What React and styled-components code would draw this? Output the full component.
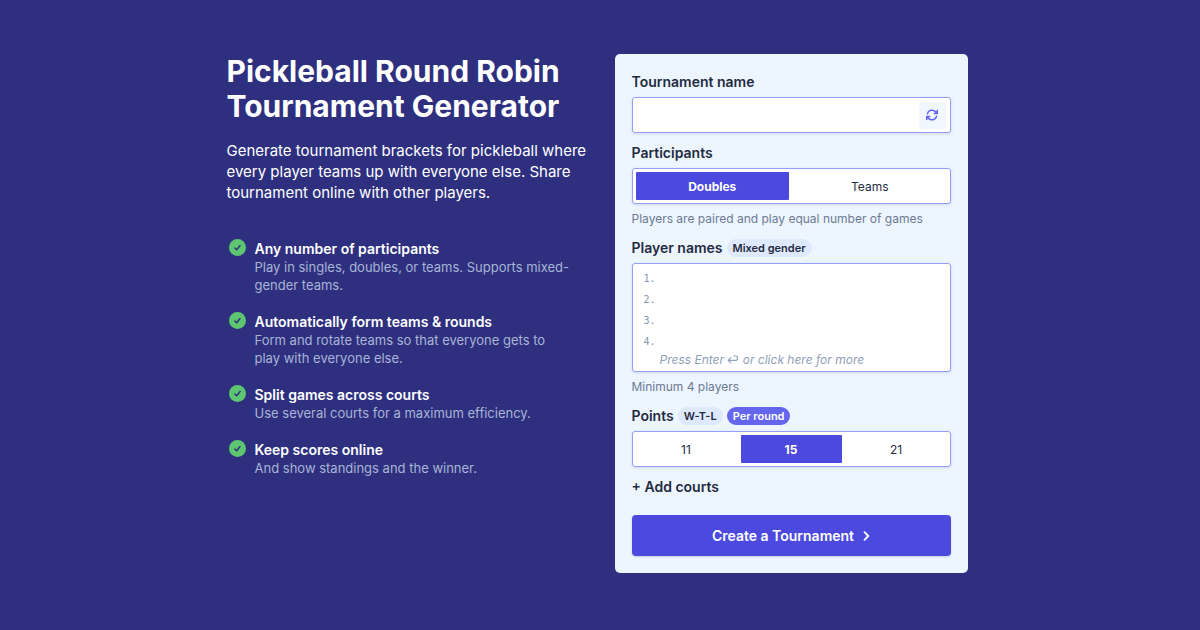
import React, { useState } from "react";
import styled, { createGlobalStyle } from "styled-components";

const features = [
  {
    title: "Any number of participants",
    text: "Play in singles, doubles, or teams. Supports mixed-gender teams.",
  },
  {
    title: "Automatically form teams & rounds",
    text: "Form and rotate teams so that everyone gets to play with everyone else.",
  },
  {
    title: "Split games across courts",
    text: "Use several courts for a maximum efficiency.",
  },
  {
    title: "Keep scores online",
    text: "And show standings and the winner.",
  },
];

const CheckIcon = () => (
  <svg width="17" height="17" viewBox="0 0 17 17" aria-hidden="true">
    <circle cx="8.5" cy="8.5" r="8.5" fill="#5ec571" />
    <path
      d="M5.8 8.9l1.9 1.9 3.4-4.3"
      fill="none"
      stroke="#2e307f"
      strokeWidth="1.4"
      strokeLinecap="round"
      strokeLinejoin="round"
    />
  </svg>
);

const RefreshIcon = () => (
  <svg width="14" height="14" viewBox="0 0 24 24" aria-hidden="true">
    <path
      d="M16.023 9.348h4.992v-.001M2.985 19.644v-4.992m0 0h4.992m-4.993 0l3.181 3.183a8.25 8.25 0 0013.803-3.7M4.031 9.865a8.25 8.25 0 0113.803-3.7l3.181 3.182m0-4.991v4.99"
      fill="none"
      stroke="currentColor"
      strokeWidth="2.6"
      strokeLinecap="round"
      strokeLinejoin="round"
    />
  </svg>
);

const ReturnIcon = () => (
  <svg width="12" height="9" viewBox="0 0 12 9" aria-hidden="true">
    <path
      d="M3.8 2.7L1.2 5.3l2.6 2.6M1.2 5.3h7.6q1.6 0 1.6-1.6V2.6q0-1.6-1.6-1.6H7"
      fill="none"
      stroke="currentColor"
      strokeWidth="1.2"
      strokeLinecap="round"
      strokeLinejoin="round"
    />
  </svg>
);

const ChevronIcon = () => (
  <svg width="7" height="10" viewBox="0 0 7 10" aria-hidden="true">
    <path
      d="M1.5 1.2L5.3 5 1.5 8.8"
      fill="none"
      stroke="currentColor"
      strokeWidth="1.8"
      strokeLinecap="round"
      strokeLinejoin="round"
    />
  </svg>
);

const Segmented = ({ name, legend, options, value, onChange }) => (
  <Segments role="radiogroup" aria-label={legend}>
    {options.map((option) => (
      <Segment key={option}>
        <SegmentInput
          type="radio"
          name={name}
          value={option}
          checked={option === value}
          onChange={() => onChange(option)}
        />
        <SegmentLabel>{option}</SegmentLabel>
      </Segment>
    ))}
  </Segments>
);

const App = () => {
  const [name, setName] = useState("");
  const [participants, setParticipants] = useState("Doubles");
  const [points, setPoints] = useState("15");
  const [scoring, setScoring] = useState("Per round");
  const [mixed, setMixed] = useState(false);
  const [players, setPlayers] = useState(["", "", "", ""]);

  const updatePlayer = (index, value) =>
    setPlayers(players.map((p, i) => (i === index ? value : p)));

  return (
    <>
      <GlobalStyle />
      <Page>
        <Intro>
          <Title>Pickleball Round Robin Tournament Generator</Title>
          <Lead>
            Generate tournament brackets for pickleball where every player teams
            up with everyone else. Share tournament online with other players.
          </Lead>
          <Features>
            {features.map(({ title, text }) => (
              <Feature key={title}>
                <CheckIcon />
                <div>
                  <FeatureTitle>{title}</FeatureTitle>
                  <FeatureText>{text}</FeatureText>
                </div>
              </Feature>
            ))}
          </Features>
        </Intro>

        <Card onSubmit={(e) => e.preventDefault()}>
          <Field>
            <FieldHeader>
              <FieldLabel htmlFor="name">Tournament name</FieldLabel>
            </FieldHeader>
            <NameBox>
              <NameInput
                id="name"
                type="text"
                value={name}
                onChange={(e) => setName(e.target.value)}
              />
              <RefreshButton type="button" aria-label="Suggest a name">
                <RefreshIcon />
              </RefreshButton>
            </NameBox>
          </Field>

          <Field>
            <FieldHeader>
              <FieldTitle>Participants</FieldTitle>
            </FieldHeader>
            <Segmented
              name="participants"
              legend="Participants"
              options={["Doubles", "Teams"]}
              value={participants}
              onChange={setParticipants}
            />
            <Hint>Players are paired and play equal number of games</Hint>
          </Field>

          <Field>
            <FieldHeader>
              <FieldTitle>Player names</FieldTitle>
              <Pill
                type="button"
                $active={mixed}
                aria-pressed={mixed}
                onClick={() => setMixed(!mixed)}
              >
                Mixed gender
              </Pill>
            </FieldHeader>
            <PlayersBox>
              {players.map((player, i) => (
                <PlayerRow key={i}>
                  <PlayerNumber>{i + 1}.</PlayerNumber>
                  <PlayerInput
                    type="text"
                    aria-label={`Player ${i + 1}`}
                    value={player}
                    onChange={(e) => updatePlayer(i, e.target.value)}
                  />
                </PlayerRow>
              ))}
              <MoreButton
                type="button"
                onClick={() => setPlayers([...players, ""])}
              >
                Press Enter <ReturnIcon /> or click here for more
              </MoreButton>
            </PlayersBox>
            <Hint>Minimum 4 players</Hint>
          </Field>

          <Field>
            <FieldHeader>
              <FieldTitle>Points</FieldTitle>
              {["W-T-L", "Per round"].map((option) => (
                <Pill
                  key={option}
                  type="button"
                  $active={option === scoring}
                  aria-pressed={option === scoring}
                  onClick={() => setScoring(option)}
                >
                  {option}
                </Pill>
              ))}
            </FieldHeader>
            <Segmented
              name="points"
              legend="Points"
              options={["11", "15", "21"]}
              value={points}
              onChange={setPoints}
            />
          </Field>

          <CourtsButton type="button">+ Add courts</CourtsButton>
          <SubmitButton type="submit">
            Create a Tournament
            <ChevronIcon />
          </SubmitButton>
        </Card>
      </Page>
    </>
  );
};

const GlobalStyle = createGlobalStyle`
  * {
    box-sizing: border-box;
  }

  body {
    margin: 0;
    background: #2e307f;
    font-family: Inter, "Liberation Sans", sans-serif;
    color: #1f2b3f;
  }

  button,
  input {
    font-family: inherit;
    color: inherit;
  }
`;

const Page = styled.main`
  display: grid;
  grid-template-columns: 362fr 353fr;
  align-items: start;
  gap: 26px;
  max-width: 789px;
  margin: 0 auto;
  padding: 54px 27px 54px 21px;

  @media (max-width: 700px) {
    grid-template-columns: 1fr;
  }
`;

const Intro = styled.section`
  color: white;
`;

const Title = styled.h1`
  margin: 0;
  font-size: 30px;
  font-weight: 700;
  line-height: 35px;
`;

const Lead = styled.p`
  margin: 16px 0 0;
  font-size: 15px;
  line-height: 21px;
`;

const Features = styled.ul`
  display: grid;
  gap: 18px;
  margin: 36px 0 0;
  padding: 0 16px 0 2px;
  list-style: none;
`;

const Feature = styled.li`
  display: flex;
  gap: 9px;

  > svg {
    flex: none;
  }
`;

const FeatureTitle = styled.h2`
  margin: 0;
  font-size: 14px;
  font-weight: 600;
  line-height: 19px;
`;

const FeatureText = styled.p`
  margin: 0;
  font-size: 13px;
  line-height: 18px;
  color: #a9b4d6;
`;

const Card = styled.form`
  display: flex;
  flex-direction: column;
  padding: 17px;
  border-radius: 5px;
  background: #edf5ff;
`;

const Field = styled.div`
  margin-bottom: 9px;
`;

const FieldHeader = styled.div`
  display: flex;
  align-items: center;
  gap: 4px;
  height: 26px;
  padding-bottom: 4px;
`;

const labelStyle = `
  font-size: 14px;
  font-weight: 600;
  line-height: 22px;
`;

const FieldLabel = styled.label`
  ${labelStyle}
`;

const FieldTitle = styled.span`
  ${labelStyle}
`;

const boxStyle = `
  border: 1px solid #959ff8;
  border-radius: 3px;
  background: white;
  box-shadow: 0 1px 3px rgba(46, 48, 127, 0.15);
`;

const NameBox = styled.div`
  ${boxStyle}
  display: flex;
  align-items: center;
  height: 36px;
  padding: 0 4px;
`;

const NameInput = styled.input`
  flex: 1;
  min-width: 0;
  padding: 0 7px;
  border: 0;
  outline: 0;
  background: transparent;
  font-size: 14px;
`;

const RefreshButton = styled.button`
  display: grid;
  place-items: center;
  width: 27px;
  height: 27px;
  padding: 0;
  border: 0;
  border-radius: 4px;
  background: #f1f7fe;
  color: #6366f1;
`;

const Segments = styled.div`
  ${boxStyle}
  display: flex;
  gap: 4px;
  height: 36px;
  padding: 3px;
`;

const Segment = styled.label`
  display: flex;
  flex: 1;
  cursor: pointer;
`;

const SegmentLabel = styled.span`
  display: flex;
  flex: 1;
  align-items: center;
  justify-content: center;
  border-radius: 1px;
  font-size: 12px;
`;

const SegmentInput = styled.input`
  width: 0;
  height: 0;
  margin: 0;
  appearance: none;

  &:checked + ${SegmentLabel} {
    background: #4c49df;
    color: white;
    font-weight: 700;
  }
`;

const Hint = styled.p`
  margin: 6px 0 0;
  font-size: 12px;
  line-height: 18px;
  color: #6b7b93;
`;

const Pill = styled.button`
  height: 18px;
  padding: 0 6px;
  border: 0;
  border-radius: 9px;
  background: ${({ $active }) => ($active ? "#6467ee" : "#dfe9fe")};
  color: ${({ $active }) => ($active ? "white" : "#1f2b3f")};
  font-size: 11px;
  font-weight: 600;
  line-height: 18px;
`;

const PlayersBox = styled.div`
  ${boxStyle}
  padding: 4px 11px 3px;
`;

const PlayerRow = styled.div`
  display: flex;
  align-items: center;
  height: 21px;
`;

const PlayerNumber = styled.span`
  width: 17px;
  font-family: "DejaVu Sans Mono", monospace;
  font-size: 10px;
  color: #8496b0;
`;

const PlayerInput = styled.input`
  flex: 1;
  min-width: 0;
  height: 19px;
  padding: 0;
  border: 0;
  outline: 0;
  font-size: 12px;
`;

const MoreButton = styled.button`
  display: block;
  margin-left: 16px;
  padding: 0;
  border: 0;
  background: transparent;
  font-size: 12px;
  font-style: italic;
  line-height: 16px;
  color: #8fa0b8;
`;

const CourtsButton = styled.button`
  align-self: flex-start;
  padding: 0;
  border: 0;
  background: transparent;
  ${labelStyle}
`;

const SubmitButton = styled.button`
  display: flex;
  align-items: center;
  justify-content: center;
  gap: 9px;
  height: 41px;
  margin-top: 17px;
  border: 0;
  border-radius: 4px;
  background: #4c49df;
  box-shadow: 0 1px 2px rgba(46, 48, 127, 0.2);
  color: white;
  font-size: 14px;
  font-weight: 600;
`;

export default App;
